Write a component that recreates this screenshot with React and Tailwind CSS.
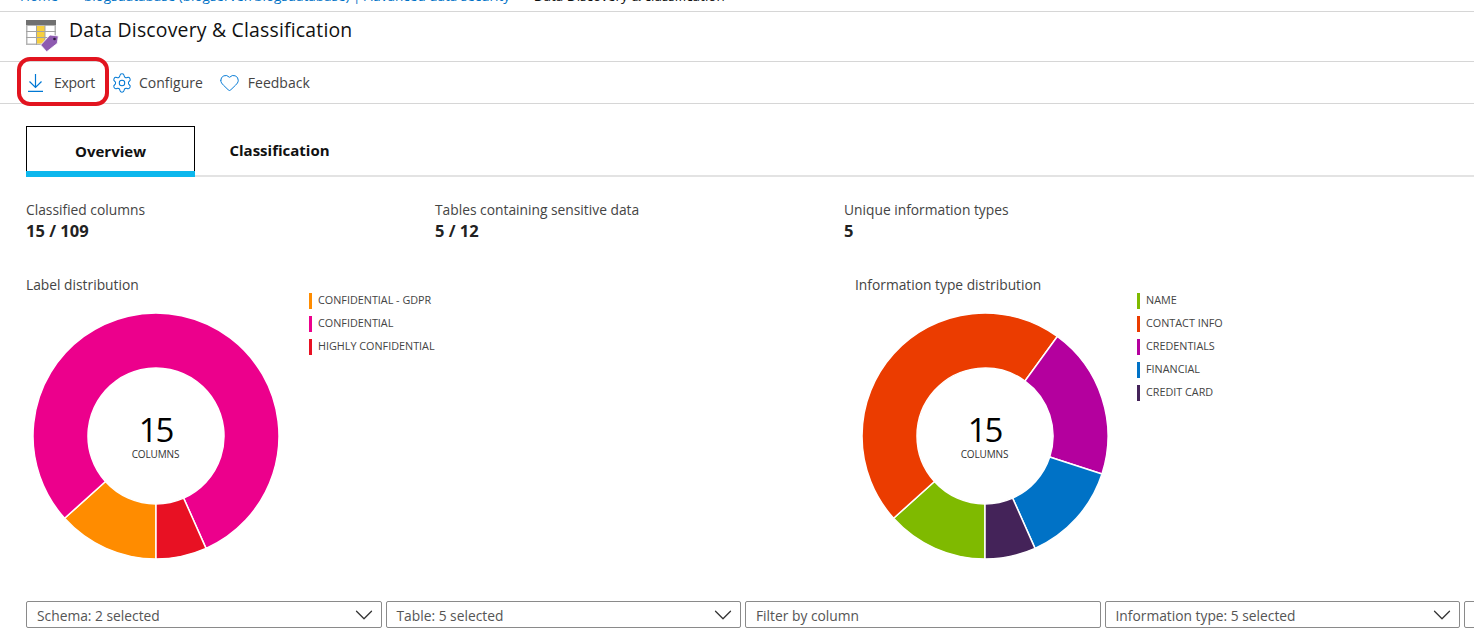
import React from 'react'
import { ChevronDown, Settings, Heart } from 'lucide-react'

const labelData = [
  { name: 'CONFIDENTIAL - GDPR', color: '#ff8c00', count: 2, start: 180 },
  { name: 'CONFIDENTIAL', color: '#ec008c', count: 12, start: 228 },
  { name: 'HIGHLY CONFIDENTIAL', color: '#e81123', count: 1, start: 156 },
]

const infoData = [
  { name: 'NAME', color: '#7fba00', count: 2, start: 180 },
  { name: 'CONTACT INFO', color: '#eb3c00', count: 7, start: 228 },
  { name: 'CREDENTIALS', color: '#b4009e', count: 3, start: 36 },
  { name: 'FINANCIAL', color: '#0072c6', count: 2, start: 108 },
  { name: 'CREDIT CARD', color: '#442359', count: 1, start: 156 },
]

const point = (radius, angle) => {
  const rad = (angle * Math.PI) / 180
  return `${123 + radius * Math.sin(rad)} ${123 - radius * Math.cos(rad)}`
}

const slicePath = (start, count) => {
  const end = start + count * 24
  const large = count * 24 > 180 ? 1 : 0
  return `M${point(123, start)} A123 123 0 ${large} 1 ${point(123, end)} L${point(68, end)} A68 68 0 ${large} 0 ${point(68, start)} Z`
}

const Donut = ({ data }) => (
  <div className="relative w-[246px] h-[246px]">
    <svg width="246" height="246" viewBox="0 0 246 246">
      {data.map((item) => (
        <path key={item.name} d={slicePath(item.start, item.count)} fill={item.color} stroke="#fff" strokeWidth="1.5" />
      ))}
    </svg>
    <div className="absolute inset-0 pt-[2px] flex flex-col items-center justify-center gap-[3px] text-black">
      <span className="text-[33px] leading-[30px] tracking-[-2px] font-medium">15</span>
      <span className="text-[10px] leading-[12px] tracking-[-0.15px] text-[#333]">COLUMNS</span>
    </div>
  </div>
)

const Legend = ({ data }) => (
  <div className="flex flex-col gap-[6px] pt-[17px]">
    {data.map((item) => (
      <div key={item.name} className="flex items-center gap-[6px] h-[17px]">
        <span className="w-[3px] h-[16px]" style={{ backgroundColor: item.color }} />
        <span className="text-[10.8px] text-[#444] whitespace-nowrap">{item.name}</span>
      </div>
    ))}
  </div>
)

const Stat = ({ label, value }) => (
  <div>
    <div className="text-[13.8px] leading-[20px] text-[#444]">{label}</div>
    <div className="text-[16.5px] leading-[22px] font-bold text-[#222]">{value}</div>
  </div>
)

const Filter = ({ text, arrow = true }) => (
  <div className="w-[355.5px] shrink-0 h-[27px] border border-[#8a8a8a] rounded-[2px] flex items-center justify-between pl-[10px] pr-[2px]">
    <span className="text-[13.8px] text-[#555] whitespace-nowrap pt-[3px]">{text}</span>
    {arrow && <ChevronDown className="w-[30px] h-[30px] text-[#333]" strokeWidth={1} />}
  </div>
)

const App = () => {
  return (
    <div className="w-[1474px] h-[633px] overflow-hidden bg-white font-['Open_Sans',sans-serif]">
      {/* Breadcrumb, cut off by the top of the picture */}
      <div className="h-[12px] border-b border-[#d6d6d6] overflow-hidden flex items-end pl-[20px] text-[13.5px] leading-[17px] whitespace-nowrap pb-[6px]">
        <span className="text-[#0072c6]">Home</span>
        <span className="text-[#777] mx-[9px]">&gt;</span>
        <span className="text-[#0072c6]">blogsdatabase (blogserver/blogsdatabase) | Advanced data security</span>
        <span className="text-[#777] mx-[8px]">&gt;</span>
        <span className="text-[#111]">Data Discovery &amp; classification</span>
      </div>

      {/* Title */}
      <div className="h-[50px] flex items-start border-b border-[#d6d6d6] pl-[26px]">
        <svg width="33" height="34" viewBox="0 0 33 34" className="mt-[8px]">
          <rect x="0" y="0" width="30" height="25" fill="#b5b5b5" />
          <rect x="0" y="0" width="30" height="5" fill="#707070" />
          <rect x="1.5" y="6" width="27" height="17.5" fill="#fff" />
          <rect x="10.5" y="6" width="8.5" height="17.5" fill="#f7cf3f" />
          <path d="M0 11.5H30M0 17.5H30M10.5 5V25M19 5V25" stroke="#a3a3a3" strokeWidth="1" />
          <path d="M14.7 25L24 15L32.3 16L31.3 23.3L20.7 31.7Z" fill="#8e5bb0" stroke="#fff" strokeWidth="0.8" />
          <circle cx="28.5" cy="19" r="1.3" fill="#2b1a3a" />
        </svg>
        <h1 className="ml-[10px] mt-[4px] text-[19.4px] leading-[27px] text-[#111] tracking-[0.2px]">Data Discovery &amp; Classification</h1>
      </div>

      {/* Toolbar */}
      <div className="h-[42px] flex items-center border-b border-[#d6d6d6] pl-[28px] text-[14px] text-[#444]">
        <div className="relative flex items-center">
          <svg width="15" height="18" viewBox="0 0 15 18" fill="none" stroke="#0078d4" strokeWidth="1.2">
            <path d="M7.5 0V13M1.5 7.5L7.5 13.5L13.5 7.5M0 17.4H15" />
          </svg>
          <span className="ml-[11px] tracking-[-0.3px]">Export</span>
          <span className="absolute left-[-11px] right-[-14px] top-[-15px] bottom-[-13px] border-[4px] border-[#e2141f] rounded-[13px]" />
        </div>
        <Settings className="w-[22px] h-[22px] ml-[16px] text-[#0078d4]" strokeWidth={1.1} />
        <span className="ml-[6px]">Configure</span>
        <Heart className="w-[21px] h-[21px] ml-[16px] text-[#0078d4]" strokeWidth={1.1} />
        <span className="ml-[8px]">Feedback</span>
      </div>

      <div className="pl-[26px]">
        {/* Tabs */}
        <div className="mt-[22px] flex h-[51px] border-b-2 border-[#e3e3e3]">
          <div className="w-[169px] h-[51px] border border-b-0 border-black flex flex-col">
            <div className="flex-1 flex items-center justify-center text-[15px] font-bold text-[#111] pt-[5px]">Overview</div>
            <div className="h-[6px] bg-[#0db7ed] mx-[-1px]" />
          </div>
          <div className="w-[169px] flex items-center justify-center text-[15px] font-bold text-[#111] pb-[1px]">Classification</div>
        </div>

        {/* Stats */}
        <div className="mt-[23px] grid grid-cols-[409px_409px_1fr]">
          <Stat label="Classified columns" value="15 / 109" />
          <Stat label="Tables containing sensitive data" value="5 / 12" />
          <Stat label="Unique information types" value="5" />
        </div>

        {/* Charts */}
        <div className="mt-[33px] h-[292px] grid grid-cols-[818px_1fr]">
          <div className="flex">
            <div className="w-[283px]">
              <div className="text-[13.8px] leading-[20px] text-[#444]">Label distribution</div>
              <div className="mt-[18px] ml-[6.5px]"><Donut data={labelData} /></div>
            </div>
            <Legend data={labelData} />
          </div>
          <div className="flex pl-[11px]">
            <div className="w-[282px]">
              <div className="text-[13.8px] leading-[20px] text-[#444]">Information type distribution</div>
              <div className="mt-[18px] ml-[6.5px]"><Donut data={infoData} /></div>
            </div>
            <Legend data={infoData} />
          </div>
        </div>

        {/* Filters */}
        <div className="mt-[34px] flex gap-[4px]">
          <Filter text="Schema: 2 selected" />
          <Filter text="Table: 5 selected" />
          <Filter text="Filter by column" arrow={false} />
          <Filter text="Information type: 5 selected" />
          <Filter text="" arrow={false} />
        </div>
      </div>
    </div>
  )
}

export default App
